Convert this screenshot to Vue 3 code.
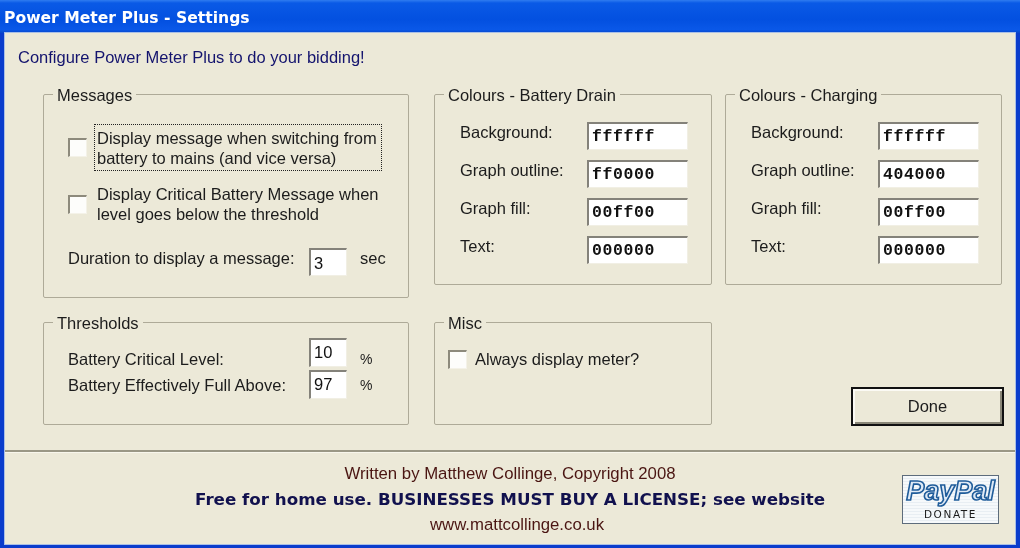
<script setup>
const swatches = [
  {
    title: 'Colours - Battery Drain',
    rows: [
      ['Background:', 'ffffff'],
      ['Graph outline:', 'ff0000'],
      ['Graph fill:', '00ff00'],
      ['Text:', '000000'],
    ],
  },
  {
    title: 'Colours - Charging',
    rows: [
      ['Background:', 'ffffff'],
      ['Graph outline:', '404000'],
      ['Graph fill:', '00ff00'],
      ['Text:', '000000'],
    ],
  },
]
</script>

<template>
  <div class="window">
    <header class="titlebar">Power Meter Plus - Settings</header>
    <div class="client">
      <main class="top">
        <h1 class="heading">Configure Power Meter Plus to do your bidding!</h1>
        <div class="groups">
          <fieldset class="group messages">
            <legend>Messages</legend>
            <div class="check-row first">
              <span class="check"></span>
              <span class="check-label focus">Display message when switching from<br />battery to mains (and vice versa)</span>
            </div>
            <div class="check-row second">
              <span class="check"></span>
              <span class="check-label">Display Critical Battery Message when<br />level goes below the threshold</span>
            </div>
            <div class="duration">
              <span class="duration-label">Duration to display a message:</span>
              <span class="field num">3</span>
              <span class="unit sec">sec</span>
            </div>
          </fieldset>

          <fieldset v-for="s in swatches" :key="s.title" class="group colours">
            <legend>{{ s.title }}</legend>
            <div class="colour-grid">
              <template v-for="r in s.rows" :key="r[0]">
                <span class="colour-label">{{ r[0] }}</span>
                <span class="field hex">{{ r[1] }}</span>
              </template>
            </div>
          </fieldset>

          <fieldset class="group thresholds">
            <legend>Thresholds</legend>
            <div class="thresh-grid">
              <span class="thresh-label one">Battery Critical Level:</span>
              <span class="field num">10</span>
              <span class="pct one">%</span>
              <span class="thresh-label two">Battery Effectively Full Above:</span>
              <span class="field num">97</span>
              <span class="pct two">%</span>
            </div>
          </fieldset>

          <fieldset class="group misc">
            <legend>Misc</legend>
            <div class="misc-row">
              <span class="check"></span>
              <span>Always display meter?</span>
            </div>
          </fieldset>

          <button class="done" type="button">Done</button>
        </div>
      </main>

      <footer class="footer">
        <div class="credits">
          <div class="maroon">Written by Matthew Collinge, Copyright 2008</div>
          <div class="license">Free for home use. BUSINESSES MUST BUY A LICENSE; see website</div>
          <div class="maroon site">www.mattcollinge.co.uk</div>
        </div>
        <div class="paypal">
          <span class="pp-logo">PayPal</span>
          <span class="pp-donate">DONATE</span>
        </div>
      </footer>
    </div>
  </div>
</template>

<style>
html, body { margin: 0; padding: 0; background: #0a3ccc; }
</style>

<style scoped>
.window {
  width: 1020px;
  height: 548px;
  display: flex;
  flex-direction: column;
  overflow: hidden;
  font-family: "Liberation Sans", Arial, sans-serif;
  font-size: 16.5px;
  color: #1c1c1c;
  background: #0a3ccc;
  filter: blur(0.35px);
}
.titlebar {
  height: 33px;
  box-sizing: border-box;
  padding: 8px 0 0 4px;
  font-family: "DejaVu Sans", sans-serif;
  font-weight: 700;
  font-size: 15.6px;
  line-height: 21px;
  color: #fff;
  background: linear-gradient(#2f7cf0 0, #0a5ae6 3px, #0350e0 60%, #0a58e8 90%, #0846c8 100%);
}
.client {
  flex: 1;
  margin: 0 5px 4px 5px;
  display: flex;
  flex-direction: column;
  background: #ece9d8;
  min-height: 0;
  box-shadow: 0 0 0 1px #a9bfe6;
}
.top {
  height: 417px;
  box-sizing: border-box;
  padding: 14px 0 0 38px;
}
.heading {
  margin: 0 0 0 -25px;
  font-weight: 400;
  font-size: 16.5px;
  line-height: 20px;
  color: #14146e;
}
.groups {
  margin-top: 16px;
  display: grid;
  grid-template-columns: 391px 291px 277px;
  grid-template-rows: 215px 114px;
  row-gap: 13px;
}
.group {
  margin: 0;
  padding: 0;
  min-width: 0;
  border: 1px solid #aeaa98;
  border-radius: 2px;
  box-sizing: border-box;
  align-self: start;
}
.group legend {
  margin-left: 9px;
  padding: 2px 4px 0;
  line-height: 20px;
  font-size: 16.5px;
}
.messages { height: 215px; width: 366px; grid-row: 1; grid-column: 1; }
.colours { height: 202px; width: 278px; }
.colours:nth-of-type(3) { width: 277px; }
.thresholds, .misc { height: 114px; grid-row: 2; }
.thresholds { grid-column: 1; width: 366px; }
.misc { grid-column: 2; width: 278px; }

.check {
  flex: none;
  width: 19px;
  height: 19px;
  background: #fdfdfb;
  border-style: solid;
  border-color: #8d8a7c #f4f2e8 #f4f2e8 #8d8a7c;
  border-width: 2px 1px 1px 2px;
  box-sizing: border-box;
}
.check-row {
  display: flex;
  align-items: center;
  margin-left: 24px;
  gap: 10px;
}
.check-row.first { margin-top: 20px; }
.check-row.second { margin-top: 14px; }
.check-label { line-height: 20px; }
.focus {
  outline: 1px dotted #222;
  padding: 3px 4px 2px 2px;
  margin-left: -2px;
}
.duration {
  margin: 24px 0 0 24px;
  display: flex;
  align-items: flex-start;
}
.duration-label { width: 241px; line-height: 20px; }
.sec { margin-left: 13px; line-height: 20px; }
.field {
  box-sizing: border-box;
  display: block;
  background: #fff;
  height: 28px;
  border-style: solid;
  border-width: 2px 1px 1px 2px;
  border-color: #84827a #f1efe4 #f1efe4 #84827a;
  color: #111;
}
.num {
  width: 38px;
  flex: none;
  line-height: 24px;
  padding-left: 3px;
}
.duration .num { line-height: 26px; }
.hex {
  width: 101px;
  font-family: "Liberation Mono", monospace;
  font-weight: 700;
  font-size: 16.5px;
  letter-spacing: 0.6px;
  line-height: 26px;
  padding-left: 3px;
}
.colour-grid {
  margin: 17px 0 0 25px;
  display: grid;
  grid-template-columns: 127px 101px;
  grid-auto-rows: 28px;
  row-gap: 10px;
}
.colour-label { line-height: 20px; }
.thresh-grid {
  margin: 5px 0 0 24px;
  display: grid;
  grid-template-columns: 241px 38px auto;
  row-gap: 1px;
  align-items: start;
}
.thresh-grid .field { height: 29px; }
.thresh-label, .pct { line-height: 20px; }
.thresh-label.one { padding-top: 11px; }
.thresh-label.two { padding-top: 5px; }
.pct { margin-left: 13px; font-size: 14px; }
.pct.one { padding-top: 11px; }
.pct.two { padding-top: 5px; }
.misc-row {
  margin: 17px 0 0 13px;
  display: flex;
  align-items: center;
  gap: 8px;
}
.done {
  grid-row: 2;
  grid-column: 3;
  justify-self: end;
  align-self: end;
  margin: 0 -2px -1px 0;
  width: 153px;
  height: 39px;
  box-sizing: border-box;
  background: #ece9d8;
  border: 2px solid #111;
  box-shadow: inset 2px 2px 0 #fbfaf4, inset -2px -2px 0 #8a8778;
  font-family: inherit;
  font-size: 16.5px;
  color: #1c1c1c;
  padding: 0;
}
.footer {
  flex: 1;
  border-top: 2px solid #9a9785;
  box-shadow: inset 0 1px 0 #f8f6ec;
  display: grid;
  grid-template-columns: 1fr auto;
  padding: 9px 16px 0 113px;
  min-height: 0;
}
.credits {
  text-align: center;
  font-size: 16.75px;
  line-height: 25.5px;
}
.maroon { color: #4a1512; }
.site { padding-left: 14px; }
.license {
  font-family: "DejaVu Sans", sans-serif;
  font-weight: 700;
  font-size: 16.7px;
  color: #11114e;
}
.paypal {
  width: 97px;
  height: 49px;
  margin-top: 14px;
  box-sizing: border-box;
  border: 1px solid #5d6c7c;
  background: repeating-linear-gradient(#f6f9fb 0 2px, #e8eef3 2px 3px);
  display: flex;
  flex-direction: column;
  align-items: center;
}
.pp-logo {
  font-family: "Liberation Sans", sans-serif;
  font-style: italic;
  font-weight: 700;
  font-size: 27px;
  line-height: 31px;
  color: #dfeaf6;
  -webkit-text-stroke: 1.6px #1f5c9a;
}
.pp-donate {
  font-family: "DejaVu Sans", sans-serif;
  font-size: 10.5px;
  line-height: 14px;
  letter-spacing: 1.6px;
  color: #1a1a1a;
}
</style>
